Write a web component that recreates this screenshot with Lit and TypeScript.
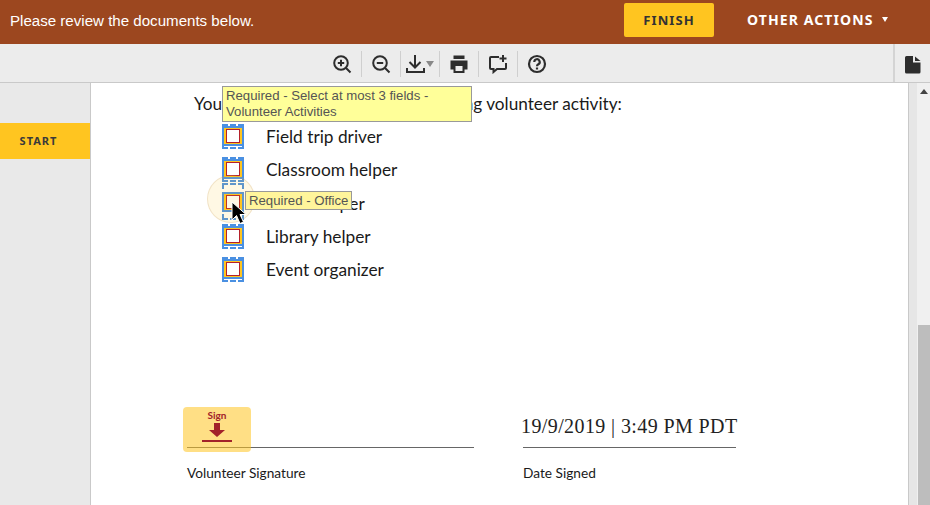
import { LitElement, html, css, svg } from "lit";
import { customElement } from "lit/decorators.js";
import { classMap } from "lit/directives/class-map.js";

const items = ["Field trip driver", "Classroom helper", "Office helper", "Library helper", "Event organizer"];

@customElement("app-root")
export class AppRoot extends LitElement {
  static styles = css`
    :host { display: block; width: 930px; height: 505px; overflow: hidden; position: relative; font-family: "Liberation Sans", Arial, sans-serif; background: #fff; }
    .top { height: 44px; box-sizing: border-box; padding-bottom: 4px; background: #9c471f; display: flex; align-items: center; color: #fff; }
    .msg { font-size: 15.1px; padding-left: 10px; flex: 1; }
    .finish { width: 90px; height: 34px; background: #ffc520; border-radius: 2px; color: #333; font: 700 13px "Noto Sans", sans-serif; letter-spacing: 1.1px; display: flex; align-items: center; justify-content: center; }
    .other { width: 216px; box-sizing: border-box; padding: 0 0 2px 33px; font: 700 14px "Noto Sans", sans-serif; letter-spacing: 1.1px; display: flex; align-items: center; gap: 8px; }
    .caret { width: 0; height: 0; border: 3.5px solid transparent; border-top: 5px solid #fff; border-bottom: 0; }
    .tools { height: 39px; box-sizing: border-box; background: #ececec; border-bottom: 1px solid #c9c9c9; display: flex; padding-left: 322px; }
    .tool { width: 39px; height: 38px; box-sizing: border-box; padding-top: 2px; display: flex; align-items: center; justify-content: center; position: relative; color: #2d2d2d; }
    .tool + .tool::before { content: ""; position: absolute; left: 0; top: 7px; height: 26px; width: 1px; background: #cfcfcf; }
    .spacer { flex: 1; }
    .panel { width: 37px; border-left: 2px solid #d4d4d4; display: flex; align-items: center; justify-content: center; box-sizing: border-box; padding-top: 2px; color: #2d2d2d; }
    .main { display: flex; height: 422px; }
    .side { width: 90px; border-right: 1px solid #c9c9c9; background: #e9e9e9; padding-top: 40px; box-sizing: content-box; }
    .start { height: 36px; box-sizing: border-box; padding: 0 13px 2px 0; background: #ffc520; color: #3a3a3a; font: 700 11px "Noto Sans", sans-serif; letter-spacing: 1px; display: flex; align-items: center; justify-content: center; }
    .doc { width: 817px; position: relative; font-family: Lato, sans-serif; color: #1a1a1a; box-sizing: border-box; padding: 9px 0 0 103px; }
    .intro { font-size: 17.2px; line-height: 24px; height: 28px; white-space: nowrap; }
    .list { display: flex; flex-direction: column; }
    .row { height: 33.3px; display: flex; align-items: center; font-size: 17.3px; padding-left: 28px; position: relative; }
    .row .label { margin-left: 22px; }
    .field { position: relative; width: 22px; height: 25px; flex: none; border: 2px dashed #4a90e2; box-sizing: border-box; }
    .field.tall { height: 37px; margin-bottom: 4px; }
    .mark { position: absolute; left: -2px; top: 0; width: 22px; height: 20px; box-sizing: border-box; border: 2px solid #4a90e2; background: #ffc520; display: flex; padding: 1px 0 0 2px; }
    .tall .mark { top: 7px; }
    .box { width: 14px; height: 14px; box-sizing: border-box; background: #fff; border: 1.5px solid #b5202a; }
    .tip { position: absolute; background: #ffff99; border: 1px solid #999; color: #555; font: 13.2px/16px "Liberation Sans", sans-serif; box-sizing: border-box; padding: 1px 3px; white-space: nowrap; }
    .tip1 { left: 131px; top: 3px; width: 250px; height: 36px; }
    .tip2 { left: 154px; top: 108px; height: 19px; padding: 0 3px; line-height: 17px; background: #fff59b; }
    .halo { position: absolute; left: 116px; top: 92px; width: 48px; height: 48px; border-radius: 50%; background: rgba(255, 197, 32, 0.12); border: 1px solid rgba(190, 150, 90, 0.22); box-sizing: border-box; }
    .cursor { position: absolute; left: 140px; top: 118px; }
    .sigs { position: absolute; left: 96px; top: 331px; display: flex; }
    .sig { position: relative; padding-top: 32px; font-size: 13.7px; }
    .sig .line { border-bottom: 1px solid #666; height: 1px; }
    .sig .cap { margin-top: 16px; line-height: 18px; }
    .s1 { width: 287px; }
    .s2 { width: 213px; margin-left: 49px; }
    .date { position: absolute; left: -2px; top: 0; font: 20px/24px "Liberation Serif", serif; white-space: nowrap; color: #222; letter-spacing: .4px; }
    .signtag { position: absolute; left: -4px; top: -7px; width: 68px; height: 45px; background: rgba(255, 197, 32, 0.55); border-radius: 4px; color: #a2222a; display: flex; flex-direction: column; align-items: center; font: 700 10px/12px Lato, sans-serif; padding-top: 2px; gap: 2px; box-sizing: border-box; }
    .scroll { width: 22px; display: flex; }
    .gutter { width: 9px; box-sizing: border-box; background: #e6e6e6; border-left: 1px solid #c9c9c9; }
    .bar { width: 14px; background: #f0f0f0; display: flex; flex-direction: column; align-items: flex-end; }
    .up { margin: 6px 2px 0 0; width: 0; height: 0; border: 4px solid transparent; border-bottom: 5px solid #444; border-top: 0; }
    .thumb { margin-top: auto; width: 12px; height: 180px; background: #bdbdbd; }
  `;

  private ic(body: unknown) {
    return html`<svg width="20" height="20" viewBox="0 0 20 20" fill="none" stroke="currentColor" stroke-width="2">${body}</svg>`;
  }

  render() {
    return html`
      <div class="top">
        <div class="msg">Please review the documents below.</div>
        <div class="finish">FINISH</div>
        <div class="other">OTHER ACTIONS<span class="caret"></span></div>
      </div>
      <div class="tools">
        <div class="tool">${this.ic(svg`<circle cx="9" cy="9" r="6.8"/><path d="M14 14l4.5 4.5M5.800 9h6.400M9 5.800v6.400"/>`)}</div>
        <div class="tool">${this.ic(svg`<circle cx="9" cy="9" r="6.8"/><path d="M14 14l4.5 4.5M5.800 9h6.400"/>`)}</div>
        <div class="tool">
          <svg width="30" height="20" viewBox="0 0 30 20" fill="none" stroke="currentColor" stroke-width="2">
            <path d="M10 1v12M4.500 8l5.500 5.500L15.500 8"/><path d="M2 14v4h17v-4"/>
            <path d="M21 7h8l-4 6z" fill="#888" stroke="none"/>
          </svg>
        </div>
        <div class="tool">
          <svg width="20" height="20" viewBox="0 0 20 20" fill="currentColor"><path d="M4.500 1.500h11v3.500h-11zM1.500 6.500h17v9h-3v3.500h-11v-3.500h-3zM6.500 12v5h7v-5z" fill-rule="evenodd"/></svg>
        </div>
        <div class="tool">${this.ic(svg`<path d="M11 3H3a1 1 0 0 0-1 1v10a1 1 0 0 0 1 1h2.500v3l3.500-3h8a1 1 0 0 0 1-1V9"/><path d="M15 1v7M11.500 4.500h7"/>`)}</div>
        <div class="tool">
          <svg width="20" height="20" viewBox="0 0 20 20" fill="none" stroke="currentColor" stroke-width="2.200"><circle cx="10" cy="10" r="8"/><path d="M7.300 8a2.700 2.700 0 1 1 4 2.300c-.9.5-1.300 1-1.300 1.900"/><path d="M10 13.500v2"/></svg>
        </div>
        <div class="spacer"></div>
        <div class="panel">
          <svg width="18" height="19" viewBox="0 0 18 19" fill="currentColor"><path d="M1 2.500A1.500 1.500 0 0 1 2.500 1H9v6.500h7.500v9.500a1.500 1.500 0 0 1-1.500 1.500H2.500A1.500 1.500 0 0 1 1 17z"/><path d="M11 1.500l5.500 4.500H11z"/></svg>
        </div>
      </div>
      <div class="main">
        <div class="side"><div class="start">START</div></div>
        <div class="doc">
          <div class="intro">You can select up to 3 of the following volunteer activity:</div>
          <div class="list">
            ${items.map((t, i) => html`<div class="row"><div class=${classMap({ field: true, tall: i === 2 })}><div class="mark"><div class="box"></div></div></div><span class="label">${t}</span></div>`)}
          </div>
          <div class="halo"></div>
          <div class="tip tip1">Required - Select at most 3 fields -<br />Volunteer Activities</div>
          <div class="tip tip2">Required - Office</div>
          <svg class="cursor" width="16" height="24" viewBox="0 0 16 24"><path d="M1 1v18l4.500-4.500 3.500 8 3.500-1.500-3.500-7.500h6z" fill="#000" stroke="#fff" stroke-width="1"/></svg>
          <div class="sigs">
            <div class="sig s1">
              <div class="signtag">Sign
                <svg width="32" height="22" viewBox="0 0 32 22" fill="#a2222a"><path d="M13 0h6v7h5l-8 7-8-7h5z"/><rect x="1" y="17" width="30" height="2"/></svg>
              </div>
              <div class="line"></div>
              <div class="cap">Volunteer Signature</div>
            </div>
            <div class="sig s2">
              <div class="date">19/9/2019 | 3:49 PM PDT</div>
              <div class="line"></div>
              <div class="cap">Date Signed</div>
            </div>
          </div>
        </div>
        <div class="scroll"><div class="gutter"></div><div class="bar"><div class="up"></div><div class="thumb"></div></div></div>
      </div>
    `;
  }
}
